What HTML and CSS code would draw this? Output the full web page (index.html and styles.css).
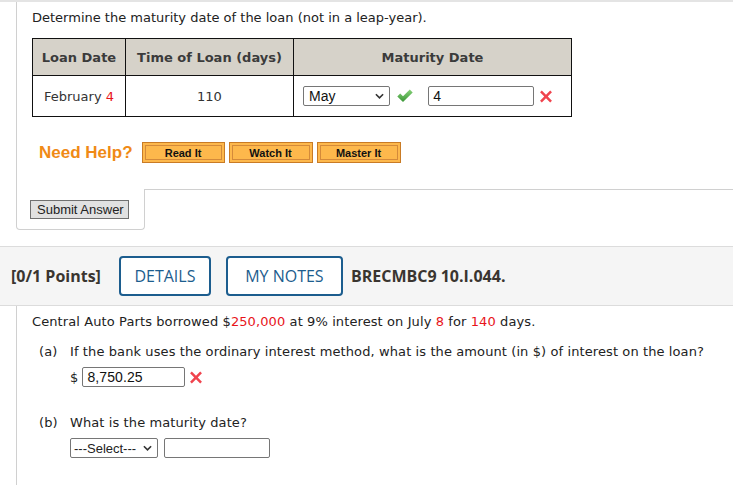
FILE: index.html
```html
<!DOCTYPE html>
<html>
<head>
<meta charset="utf-8">
<link rel="stylesheet" href="styles.css">
</head>
<body>
<div class="question">
  <div class="panel">
    <p class="prompt">Determine the maturity date of the loan (not in a leap-year).</p>
    <table class="loan">
      <tr>
        <th class="c1">Loan Date</th>
        <th class="c2">Time of Loan (days)</th>
        <th class="c3">Maturity Date</th>
      </tr>
      <tr>
        <td>February <span class="red">4</span></td>
        <td>110</td>
        <td class="answers">
          <span class="sel sel-month">May<svg class="caret" viewBox="0 0 10 6"><path d="M1 1l4 4 4-4" fill="none" stroke="#333" stroke-width="1.8"/></svg></span>
          <svg class="mark check" viewBox="0 0 16 14"><defs><linearGradient id="g" x1="0" y1="0" x2="0" y2="1"><stop offset="0" stop-color="#86d178"/><stop offset="1" stop-color="#3a9636"/></linearGradient></defs><path d="M0.3 7.4L3.2 4.5 6 7.3 12.8 0.5 15.7 3.4 6 13.1z" fill="url(#g)"/></svg>
          <span class="field field-day">4</span>
          <svg class="mark cross" viewBox="0 0 14 14"><path d="M2.5 0.6L7 5.1 11.5 0.6 13.4 2.5 8.9 7 13.4 11.5 11.5 13.4 7 8.9 2.5 13.4 0.6 11.5 5.1 7 0.6 2.5z" fill="#f0434d"/></svg>
        </td>
      </tr>
    </table>
    <div class="help">
      <span class="help-label">Need Help?</span>
      <span class="hbtn hb-read"><span>Read It</span></span>
      <span class="hbtn hb-watch"><span>Watch It</span></span>
      <span class="hbtn hb-master"><span>Master It</span></span>
    </div>
  </div>
  <div class="submit-row">
    <div class="submit-tab"><span class="submit">Submit Answer</span></div>
    <div class="submit-rest"></div>
  </div>
</div>

<div class="qbar">
  <span class="points">[0/1 Points]</span>
  <span class="obtn obtn-details">DETAILS</span>
  <span class="obtn obtn-notes">MY NOTES</span>
  <span class="qid">BRECMBC9 10.I.044.</span>
</div>

<div class="panel panel-low">
  <p class="stem">Central Auto Parts borrowed $<span class="red">250,000</span> at 9% interest on July <span class="red">8</span> for <span class="red">140</span> days.</p>
  <div class="part part-a">
    <span class="plabel">(a)</span>
    <span class="ptext">If the bank uses the ordinary interest method, what is the amount (in $) of interest on the loan?</span>
  </div>
  <div class="ans ans-a">
    <span class="dollar">$</span>
    <span class="field field-amt">8,750.25</span>
    <svg class="mark cross" viewBox="0 0 14 14"><path d="M2.5 0.6L7 5.1 11.5 0.6 13.4 2.5 8.9 7 13.4 11.5 11.5 13.4 7 8.9 2.5 13.4 0.6 11.5 5.1 7 0.6 2.5z" fill="#f0434d"/></svg>
  </div>
  <div class="part part-b">
    <span class="plabel">(b)</span>
    <span class="ptext">What is the maturity date?</span>
  </div>
  <div class="ans ans-b">
    <span class="sel sel-pick">---Select---<svg class="caret" viewBox="0 0 10 6"><path d="M1 1l4 4 4-4" fill="none" stroke="#333" stroke-width="1.8"/></svg></span>
    <span class="field field-date"></span>
  </div>
</div>
</body>
</html>
```

FILE: styles.css
```css
* { box-sizing: border-box; }
html, body { margin: 0; padding: 0; background: #fff; }
body {
  width: 733px;
  height: 485px;
  overflow: hidden;
  font-family: "DejaVu Sans", Verdana, sans-serif;
  font-size: 13px;
  color: #222;
  border-top: 2px solid #e4e4e4;
}
.red { color: #e8141a; }

/* upper question */
.panel {
  margin-left: 16px;
  border-left: 1px solid #d0d0d0;
  padding-left: 15px;
}
.prompt {
  margin: 0;
  padding-top: 8px;
  line-height: 15px;
}
.loan {
  margin-top: 13px;
  border-collapse: collapse;
  width: 540px;
}
.loan th, .loan td {
  border: 1px solid #111;
  text-align: center;
  padding: 0;
}
.loan th {
  background: #d6d2c9;
  color: #3b3b3b;
  height: 37px;
  font-weight: bold;
}
.loan td { height: 41px; color: #333; }
.c1 { width: 93px; }
.c2 { width: 168px; }
.answers { text-align: left !important; padding-left: 9px !important; }
.answers > * { vertical-align: middle; }

.sel {
  display: inline-flex;
  align-items: center;
  justify-content: space-between;
  height: 20px;
  border: 1px solid #767676;
  border-radius: 2px;
  background: #fff;
  font-family: "Liberation Sans", Arial, sans-serif;
  font-size: 13px;
  color: #111;
  padding: 0 5px 0 4px;
}
.caret { width: 9px; height: 6px; }
.sel-month { width: 87px; padding-left: 5px; font-size: 14px; }
.mark { width: 14px; height: 13px; display: inline-block; }
.check { width: 16px; height: 14px; }
.answers .check { margin-left: 3px; }
.field {
  display: inline-flex;
  align-items: center;
  height: 20px;
  border: 1px solid #767676;
  border-radius: 2px;
  background: #fff;
  font-family: "Liberation Sans", Arial, sans-serif;
  font-size: 14px;
  color: #111;
  padding-left: 4px;
}
.field-day { width: 106px; margin-left: 11px; }
.answers .cross { margin-left: 1px; }

.help {
  display: flex;
  align-items: center;
  margin-top: 25px;
  padding-left: 7px;
  padding-bottom: 26px;
}
.help-label {
  font-family: "Liberation Sans", Arial, sans-serif;
  font-weight: bold;
  font-size: 17px;
  color: #f08a16;
  margin-right: 9px;
}
.hbtn {
  display: inline-block;
  height: 21px;
  background: #fdb84c;
  border: 1px solid #c97b25;
  padding: 2px;
  margin-right: 4px;
}
.hbtn span {
  display: flex;
  align-items: center;
  justify-content: center;
  height: 15px;
  border: 1px solid #d48a3a;
  font-family: "Liberation Sans", Arial, sans-serif;
  font-weight: bold;
  font-size: 11px;
  color: #111;
}
.hb-read { width: 83px; }
.hb-watch { width: 84px; }
.hb-master { width: 84px; }

.submit-row { display: flex; height: 41px; }
.submit-tab {
  width: 129px;
  margin-left: 16px;
  border-left: 1px solid #d0d0d0;
  border-right: 1px solid #d0d0d0;
  border-bottom: 1px solid #d0d0d0;
  border-bottom-left-radius: 4px;
  border-bottom-right-radius: 4px;
  padding: 11px 0 0 13px;
}
.submit-rest { flex: 1; border-top: 1px solid #d0d0d0; }
.submit {
  display: inline-flex;
  align-items: center;
  height: 19px;
  padding: 0 4px 0 6px;
  background: #e1e1e1;
  border: 1px solid #707070;
  font-family: "Liberation Sans", Arial, sans-serif;
  font-size: 13px;
  color: #222;
}

/* question bar */
.qbar {
  margin-top: 16px;
  height: 60px;
  background: #f5f5f5;
  border-top: 1px solid #dcdcdc;
  border-bottom: 1px solid #dcdcdc;
  display: flex;
  align-items: center;
  padding-left: 11px;
  font-family: "Open Sans", sans-serif;
  font-size: 16px;
}
.points { font-weight: bold; color: #3a3530; margin-right: 18px; }
.obtn {
  display: inline-flex;
  align-items: center;
  justify-content: center;
  height: 40px;
  border: 2px solid #1c5d8e;
  border-radius: 4px;
  background: #fff;
  color: #1c5d8e;
  margin-right: 15px;
}
.obtn-details { width: 92px; }
.obtn-notes { width: 117px; margin-right: 8px; }
.qid { font-weight: bold; color: #3a3530; }

/* lower question */
.panel-low { height: 180px; padding-top: 8px; letter-spacing: 0.1px; }
.stem { margin: 0; line-height: 15px; }
.part { display: flex; margin-left: 7px; line-height: 15px; }
.plabel { width: 31px; }
.part-a { margin-top: 15px; }
.ans { display: flex; align-items: center; margin-left: 38px; }
.ans-a { margin-top: 8px; }
.dollar { margin-right: 4px; }
.field-amt { width: 103px; margin-right: 4px; }
.part-b { margin-top: 28px; }
.ans-b { margin-top: 8px; }
.sel-pick { width: 88px; font-size: 13px; color: #222; padding-left: 3px; letter-spacing: 0; }
.field-date { width: 106px; margin-left: 6px; }
```
